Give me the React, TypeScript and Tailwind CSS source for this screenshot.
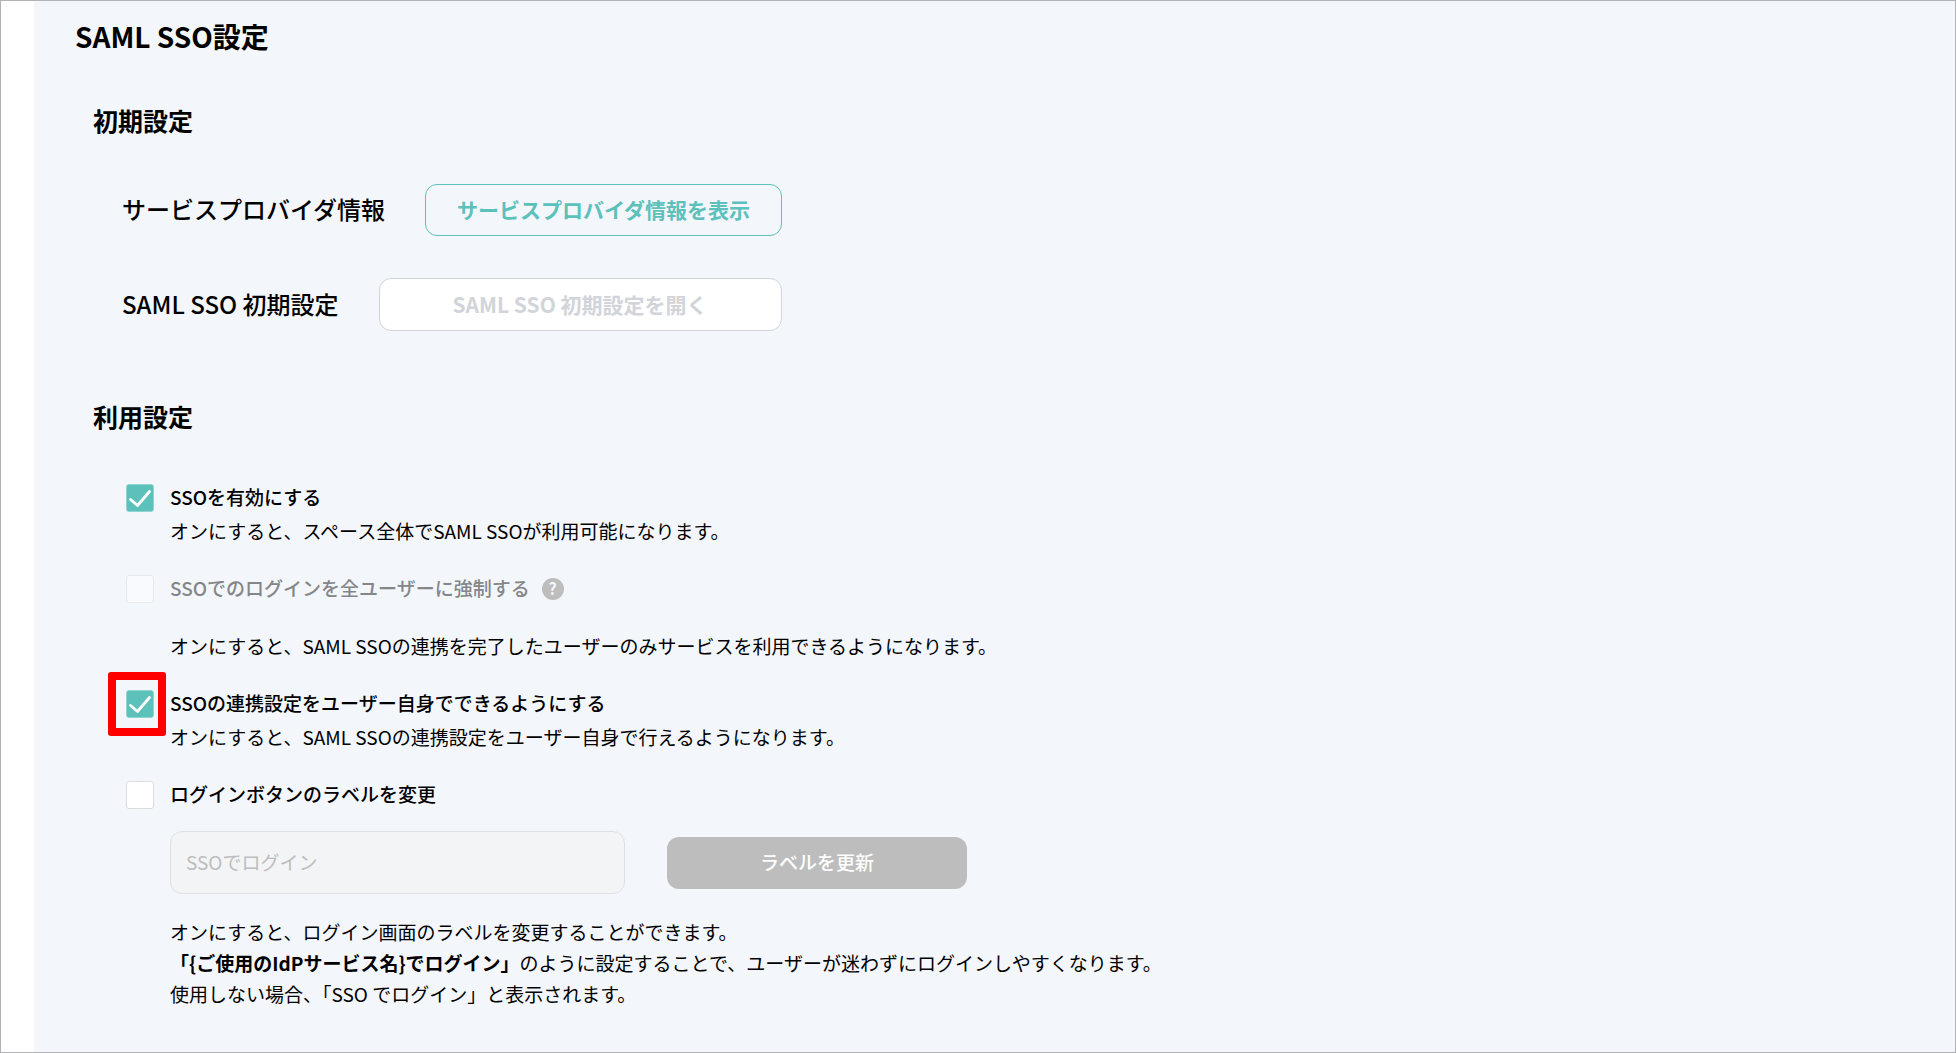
import { useState, type ReactNode } from "react";

type CheckProps = {
  id: string;
  label: string;
  defaultChecked?: boolean;
  disabled?: boolean;
  highlighted?: boolean;
  hint?: ReactNode;
};

function CheckRow({ id, label, defaultChecked = false, disabled = false, highlighted = false, hint }: CheckProps) {
  const [checked, setChecked] = useState(defaultChecked);
  return (
    <div className="flex items-center gap-4">
      <span className={disabled ? "relative grid size-7 shrink-0 opacity-50" : "relative grid size-7 shrink-0"}>
        <input
          id={id}
          type="checkbox"
          checked={checked}
          disabled={disabled}
          onChange={(e) => setChecked(e.target.checked)}
          className="col-start-1 row-start-1 size-7 appearance-none rounded-[3px] border border-[#dcdcdc] bg-white checked:border-[#8fd5d1] checked:bg-[#5dc1bb]"
        />
        {checked && (
          <svg viewBox="0 0 28 28" className="pointer-events-none col-start-1 row-start-1 size-7" fill="none">
            <path d="M4.5 15.5L11.5 21.5L23.5 7.5" stroke="#fff" strokeWidth="2.8" strokeLinecap="round" strokeLinejoin="round" />
          </svg>
        )}
        {highlighted && (
          <span className="pointer-events-none absolute -inset-y-[18px] right-[-12px] left-[-18px] rounded-[3px] border-8 border-[#ff0000]" />
        )}
      </span>
      <label
        htmlFor={id}
        className={disabled ? "pb-px leading-[30px] font-medium text-[#858688]" : "pb-px leading-[30px] font-medium"}
      >
        {label}
      </label>
      {hint}
    </div>
  );
}

function HelpIcon() {
  return (
    <button
      type="button"
      aria-label="ヘルプ"
      className="-ml-1 grid size-[22px] place-items-center rounded-full bg-[#bdbdbd] pb-0.5 text-base leading-none font-bold text-[#f3f6fb]"
    >
      ?
    </button>
  );
}

export default function App() {
  return (
    <div className="flex min-h-screen border border-[#b0b2b5] bg-white font-['Noto_Sans_CJK_JP',sans-serif] text-[19px] leading-[31px] text-black">
      <main className="ml-[33px] flex-1 bg-[#f3f6fb] pt-[17px] pb-10 pl-[41px]">
        <h1 className="text-[28px] leading-9 font-bold">SAML SSO設定</h1>

        <section className="mt-[50px] pl-[18px]">
          <h2 className="text-[25px] leading-8 font-bold">初期設定</h2>
          <div className="mt-12 flex flex-col gap-[42px] pl-[29px] text-2xl font-medium">
            <div className="flex items-center gap-10">
              <span className="pb-0.5">サービスプロバイダ情報</span>
              <button
                type="button"
                className="h-[52px] w-[357px] rounded-xl border border-[#5dc1bb] pb-0.5 text-[21px] font-bold text-[#5dc1bb]"
              >
                サービスプロバイダ情報を表示
              </button>
            </div>
            <div className="flex items-center gap-10">
              <span className="pb-0.5">SAML SSO 初期設定</span>
              <button
                type="button"
                disabled
                className="h-[53px] w-[403px] rounded-xl border border-[#d1d4d9] bg-white pb-0.5 text-[21px] font-bold text-[#d1d4d9]"
              >
                SAML SSO 初期設定を開く
              </button>
            </div>
          </div>
        </section>

        <section className="mt-[69px] pl-[18px]">
          <h2 className="text-[25px] leading-8 font-bold">利用設定</h2>
          <div className="mt-[50px] flex flex-col gap-[27px] pl-[33px]">
            <div>
              <CheckRow id="enable" label="SSOを有効にする" defaultChecked />
              <p className="mt-0.5 pl-11">オンにすると、スペース全体でSAML SSOが利用可能になります。</p>
            </div>
            <div>
              <CheckRow id="force" label="SSOでのログインを全ユーザーに強制する" disabled hint={<HelpIcon />} />
              <p className="mt-[26px] pl-11">オンにすると、SAML SSOの連携を完了したユーザーのみサービスを利用できるようになります。</p>
            </div>
            <div>
              <CheckRow id="self" label="SSOの連携設定をユーザー自身でできるようにする" defaultChecked highlighted />
              <p className="mt-0.5 pl-11">オンにすると、SAML SSOの連携設定をユーザー自身で行えるようになります。</p>
            </div>
            <div>
              <CheckRow id="label" label="ログインボタンのラベルを変更" />
              <div className="mt-[21px] flex items-center gap-[42px] pl-11">
                <input
                  type="text"
                  aria-label="ログインボタンのラベル"
                  placeholder="SSOでログイン"
                  disabled
                  className="h-[63px] w-[455px] rounded-xl border border-[#dfe0e2] bg-[#f3f4f6] px-[15px] pb-0.5 placeholder:text-[#bdbdbd]"
                />
                <button type="button" disabled className="h-[52px] w-[300px] rounded-xl bg-[#bdbdbd] pb-0.5 font-medium text-white">
                  ラベルを更新
                </button>
              </div>
              <p className="mt-[22px] pl-11">
                オンにすると、ログイン画面のラベルを変更することができます。
                <br />
                <strong className="font-bold">「{"{"}ご使用のIdPサービス名{"}"}でログイン」</strong>
                のように設定することで、ユーザーが迷わずにログインしやすくなります。
                <br />
                使用しない場合、「SSO でログイン」と表示されます。
              </p>
            </div>
          </div>
        </section>
      </main>
    </div>
  );
}
